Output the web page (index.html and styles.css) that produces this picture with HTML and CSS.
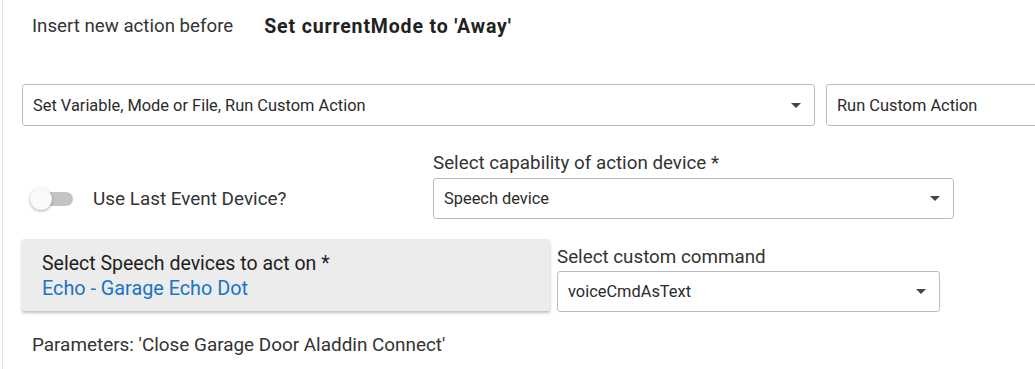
FILE: index.html
```html
<!DOCTYPE html>
<html>
<head>
<meta charset="utf-8">
<link rel="stylesheet" href="styles.css">
</head>
<body>
<div class="page">
  <div class="header">
    <span class="lead">Insert new action before</span>
    <span class="target">Set currentMode to 'Away'</span>
  </div>

  <div class="row row-actions">
    <div class="select select-type">
      <span>Set Variable, Mode or File, Run Custom Action</span>
      <span class="arrow"></span>
    </div>
    <div class="select select-sub">
      <span>Run Custom Action</span>
    </div>
  </div>

  <div class="row row-cap">
    <div class="toggle-wrap">
      <span class="toggle"><span class="track"></span><span class="knob"></span></span>
      <span class="toggle-label">Use Last Event Device?</span>
    </div>
    <div class="field field-cap">
      <div class="label">Select capability of action device *</div>
      <div class="select">
        <span>Speech device</span>
        <span class="arrow"></span>
      </div>
    </div>
  </div>

  <div class="row row-dev">
    <div class="card">
      <div class="card-title">Select Speech devices to act on *</div>
      <div class="card-value">Echo - Garage Echo Dot</div>
    </div>
    <div class="field field-cmd">
      <div class="label">Select custom command</div>
      <div class="select">
        <span>voiceCmdAsText</span>
        <span class="arrow"></span>
      </div>
    </div>
  </div>

  <div class="params">Parameters: 'Close Garage Door Aladdin Connect'</div>
</div>
</body>
</html>
```

FILE: styles.css
```css
html, body {
  margin: 0;
  padding: 0;
  background: #ffffff;
  overflow: hidden;
}

body {
  font-family: Roboto, "Liberation Sans", Arial, sans-serif;
  color: #333333;
  width: 1035px;
  height: 369px;
}

.page {
  margin-left: 2px;
  border-left: 1px solid #e4e4e4;
  height: 369px;
  box-sizing: border-box;
  padding-left: 19px;
  overflow: hidden;
}

.header {
  height: 52px;
  display: flex;
  align-items: center;
  padding-left: 10px;
  font-size: 18.7px;
  gap: 31px;
}

.target {
  font-weight: 700;
  font-size: 19.5px;
  letter-spacing: 0.85px;
  color: #222222;
}

.row {
  display: flex;
}

.row-actions {
  margin-top: 32px;
  gap: 11px;
}

.select {
  box-sizing: border-box;
  height: 42px;
  border: 1px solid #bdbdbd;
  border-radius: 3px;
  display: flex;
  align-items: center;
  justify-content: space-between;
  padding-left: 10px;
  padding-right: 13px;
  font-size: 16.4px;
  color: #2b2b2b;
  background: #fff;
  flex-shrink: 0;
}

.arrow {
  width: 0;
  height: 0;
  border-left: 5.5px solid transparent;
  border-right: 5.5px solid transparent;
  border-top: 5.5px solid #444;
}

.select-type {
  width: 793px;
}

.select-sub {
  width: 230px;
}

.row-cap {
  margin-top: 26px;
}

.toggle-wrap {
  width: 411px;
  flex-shrink: 0;
  display: flex;
  align-items: center;
  align-self: flex-end;
  height: 41px;
  padding-left: 8px;
  box-sizing: border-box;
}

.toggle {
  position: relative;
  width: 44px;
  height: 22px;
  display: inline-block;
}

.track {
  position: absolute;
  left: 3px;
  top: 4px;
  width: 40px;
  height: 14px;
  border-radius: 7px;
  background: #c4c4c4;
}

.knob {
  position: absolute;
  left: 0;
  top: 0;
  width: 22px;
  height: 22px;
  border-radius: 50%;
  background: #fafafa;
  box-shadow: 0 1px 3px rgba(0,0,0,0.35);
}

.toggle-label {
  margin-left: 19px;
  font-size: 18.9px;
}

.field {
  display: flex;
  flex-direction: column;
}

.label {
  font-size: 18.8px;
  line-height: 22px;
  color: #333;
}

.field-cap .select {
  width: 521px;
  height: 41px;
  margin-top: 4px;
}

.row-dev {
  margin-top: 20px;
  gap: 7px;
}

.card {
  width: 528px;
  height: 72px;
  flex-shrink: 0;
  box-sizing: border-box;
  background: #ececec;
  border-radius: 2px;
  box-shadow: 0 2px 3px rgba(0,0,0,0.25);
  padding: 12px 20px 10px 20px;
  font-size: 19.5px;
}

.card-title {
  line-height: 25px;
  color: #1e1e1e;
}

.card-value {
  line-height: 25px;
  color: #1a73c8;
  font-size: 19.8px;
}

.field-cmd {
  padding-top: 7px;
}

.field-cmd .select {
  width: 383px;
  height: 41px;
  margin-top: 3px;
}

.params {
  margin-top: 22px;
  padding-left: 10px;
  font-size: 18.9px;
  line-height: 22px;
}
```
